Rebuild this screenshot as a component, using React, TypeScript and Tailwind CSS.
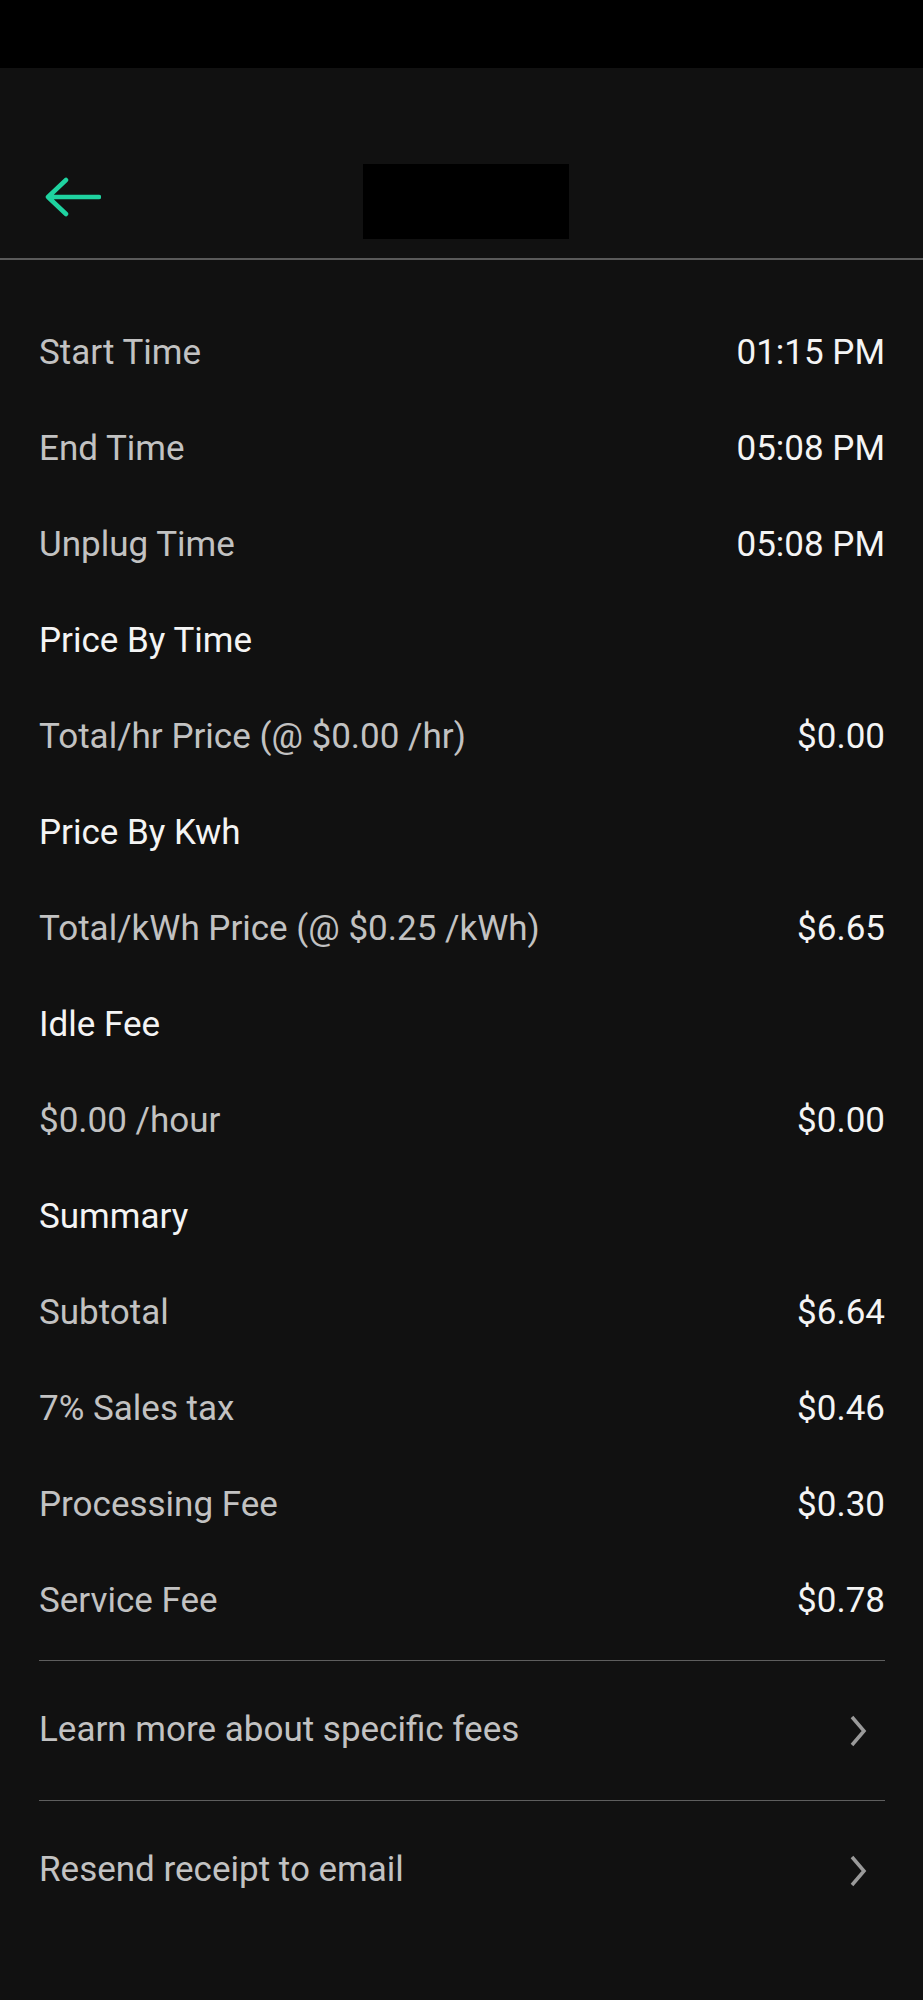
const rows: { label: string; value?: string; heading?: boolean }[] = [
  { label: "Start Time", value: "01:15 PM" },
  { label: "End Time", value: "05:08 PM" },
  { label: "Unplug Time", value: "05:08 PM" },
  { label: "Price By Time", heading: true },
  { label: "Total/hr Price (@ $0.00 /hr)", value: "$0.00" },
  { label: "Price By Kwh", heading: true },
  { label: "Total/kWh Price (@ $0.25 /kWh)", value: "$6.65" },
  { label: "Idle Fee", heading: true },
  { label: "$0.00 /hour", value: "$0.00" },
  { label: "Summary", heading: true },
  { label: "Subtotal", value: "$6.64" },
  { label: "7% Sales tax", value: "$0.46" },
  { label: "Processing Fee", value: "$0.30" },
  { label: "Service Fee", value: "$0.78" },
];

function Chevron() {
  return (
    <svg width="20" height="32" viewBox="0 0 20 32" fill="none">
      <path d="M3 2 L15 16 L3 30" stroke="#9a9a9a" strokeWidth="3.5" />
    </svg>
  );
}

export default function App() {
  return (
    <div className="min-h-[2000px] bg-[#111111] font-['Roboto',sans-serif]">
      <div className="h-[68px] bg-black" />
      <header className="h-[190px] pt-[96px]">
        <div className="grid h-[75px] grid-cols-[1fr_auto_1fr] items-center">
          <div className="-mt-[9px] pl-[45px]">
            <svg width="56" height="40" viewBox="0 0 56 40" fill="none">
              <path
                d="M54 20 H4 M21 3 L3 20 L21 37"
                stroke="#1fd3a0"
                strokeWidth="4.5"
                strokeLinecap="round"
                strokeLinejoin="round"
              />
            </svg>
          </div>
          <div className="ml-[9px] h-[75px] w-[206px] bg-black" />
          <div />
        </div>
      </header>
      <div className="h-[2px] bg-[#5a5a5a]" />
      <div className="pl-[39px] pr-[38px] pt-[45px]">
        {rows.map((r) => (
          <div key={r.label} className="flex h-[96px] items-center justify-between text-[35px]">
            <span className={r.heading ? "text-[#f4f4f4]" : "text-[#c2c2c2]"}>{r.label}</span>
            {r.value && <span className="text-[#f4f4f4]">{r.value}</span>}
          </div>
        ))}
        <div className="mt-[11px] h-px bg-[#5e5e5e]" />
        <div className="flex h-[139px] items-center justify-between pr-[16px] text-[35px] text-[#c2c2c2]">
          <span>Learn more about specific fees</span>
          <Chevron />
        </div>
        <div className="h-px bg-[#5e5e5e]" />
        <div className="flex h-[139px] items-center justify-between pr-[16px] text-[35px] text-[#c2c2c2]">
          <span>Resend receipt to email</span>
          <Chevron />
        </div>
      </div>
    </div>
  );
}
